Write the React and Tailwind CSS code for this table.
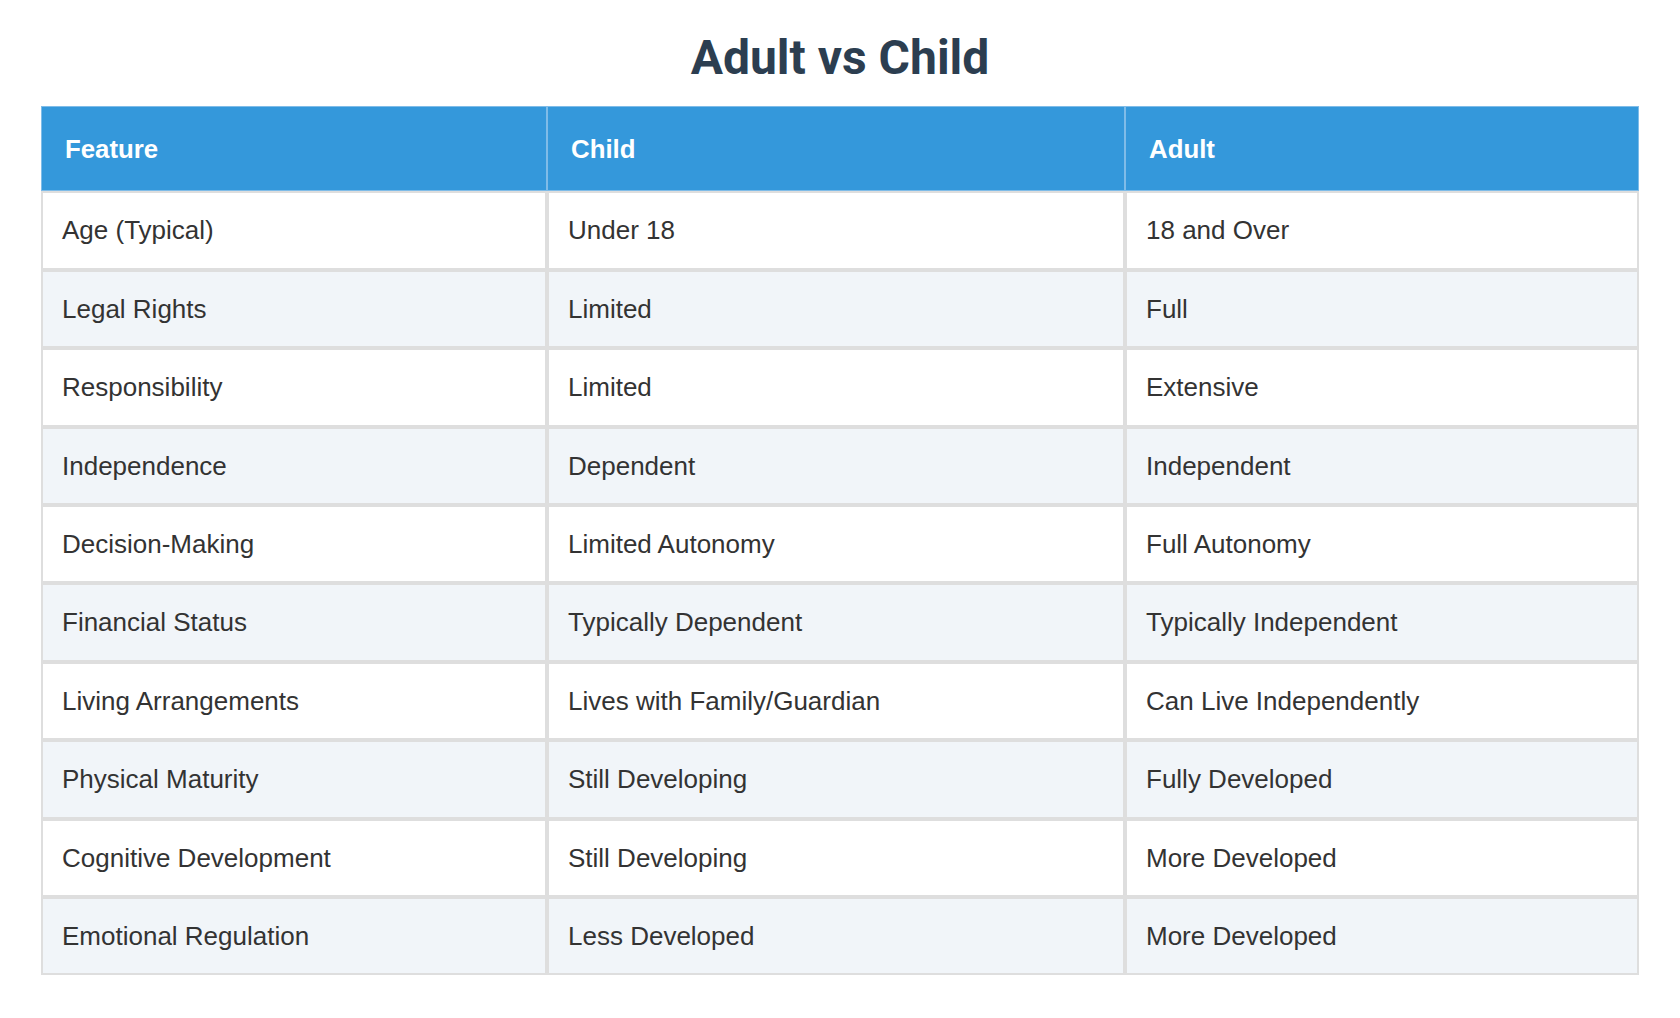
// App.jsx
// 성인 vs 아동 비교표 화면
// - 제목 + 3열 비교 테이블 (짝수 행 배경색 교차)

const rows = [
  ["Age (Typical)", "Under 18", "18 and Over"],
  ["Legal Rights", "Limited", "Full"],
  ["Responsibility", "Limited", "Extensive"],
  ["Independence", "Dependent", "Independent"],
  ["Decision-Making", "Limited Autonomy", "Full Autonomy"],
  ["Financial Status", "Typically Dependent", "Typically Independent"],
  ["Living Arrangements", "Lives with Family/Guardian", "Can Live Independently"],
  ["Physical Maturity", "Still Developing", "Fully Developed"],
  ["Cognitive Development", "Still Developing", "More Developed"],
  ["Emotional Regulation", "Less Developed", "More Developed"],
];

const headers = ["Feature", "Child", "Adult"];

export default function App() {
  return (
    <div className="h-[1018px] w-full overflow-hidden bg-white pt-[30px] font-['Liberation_Sans',Arial,sans-serif]">
      {/* 제목 */}
      <h1 className="mb-[20px] text-center font-['Roboto',sans-serif] text-[48px] font-bold leading-[56px] text-[#2c3e50]">
        Adult vs Child
      </h1>

      {/* 비교 테이블 */}
      <table className="mx-auto w-[1598px] table-fixed border-separate border-spacing-0">
        <colgroup>
          <col className="w-[506px]" />
          <col className="w-[578px]" />
          <col className="w-[514px]" />
        </colgroup>
        <thead>
          <tr>
            {headers.map((h) => (
              <th
                key={h}
                className="border border-[#7fbce8] bg-[#3498db] px-[23px] py-[26.5px] text-left text-[25.8px] font-bold leading-[30.4px] text-white"
              >
                {h}
              </th>
            ))}
          </tr>
        </thead>
        <tbody>
          {rows.map((row, i) => (
            <tr key={row[0]} className={i % 2 === 1 ? "bg-[#f1f5f9]" : "bg-white"}>
              {row.map((cell, j) => (
                <td
                  key={j}
                  className="border-2 border-[#dedede] px-[19px] py-[22px] text-[26px] leading-[30.4px] text-[#333333]"
                >
                  {cell}
                </td>
              ))}
            </tr>
          ))}
        </tbody>
      </table>
    </div>
  );
}
